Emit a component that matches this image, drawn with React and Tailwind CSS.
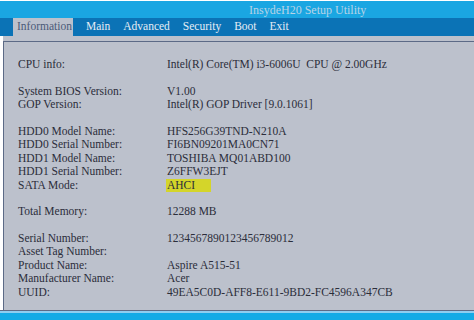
import React from 'react';

const groups = [
  [['CPU info:', 'Intel(R) Core(TM) i3-6006U\u00a0\u00a0CPU @ 2.00GHz']],
  [
    ['System BIOS Version:', 'V1.00'],
    ['GOP Version:', 'Intel(R) GOP Driver [9.0.1061]'],
  ],
  [
    ['HDD0 Model Name:', 'HFS256G39TND-N210A'],
    ['HDD0 Serial Number:', 'FI6BN09201MA0CN71'],
    ['HDD1 Model Name:', 'TOSHIBA MQ01ABD100'],
    ['HDD1 Serial Number:', 'Z6FFW3EJT'],
    ['SATA Mode:', 'AHCI', true],
  ],
  [['Total Memory:', '12288 MB']],
  [
    ['Serial Number:', '1234567890123456789012'],
    ['Asset Tag Number:', ''],
    ['Product Name:', 'Aspire A515-51'],
    ['Manufacturer Name:', 'Acer'],
    ['UUID:', '49EA5C0D-AFF8-E611-9BD2-FC4596A347CB'],
  ],
];

const tabs = ['Main', 'Advanced', 'Security', 'Boot', 'Exit'];

export default function App() {
  return (
    <div
      className="w-[474px] h-[320px] bg-white flex flex-col overflow-hidden"
      style={{ fontFamily: '"Liberation Serif", serif' }}
    >
      <div className="mt-[1px] h-[17px] bg-[#1aa6e2] flex items-center pl-[249px] text-[12px] text-[#b9d3e6]">
        InsydeH20 Setup Utility
      </div>
      <div className="h-[18px] bg-[#0b73b6] flex items-stretch pl-[13px] text-[11.5px] text-[#e6edf5]">
        <div className="bg-[#bcc1cc] text-[#4b5a78] pl-[4px] pr-[1px] flex items-center">Information</div>
        <div className="flex items-center gap-[13px] pl-[13px]">
          {tabs.map((t) => (
            <span key={t}>{t}</span>
          ))}
        </div>
      </div>
      <div className="flex-1 flex flex-col bg-[#bcc1cc] ml-[3px] border-l border-[#5c6a86]">
        <div className="h-[5px] -ml-[1px] bg-[#bcc1cc]" />
        <div className="h-[1px] bg-[#5c6a86] -ml-[1px]" />
        <div className="flex-1 pt-[16px] pl-[14px] text-[11.5px] leading-[13.5px] text-[#2b2d3a] flex flex-col gap-[13px]">
          {groups.map((g, i) => (
            <div key={i} className="flex flex-col">
              {g.map(([label, value, hi]) => (
                <div key={label} className="flex">
                  <span className="w-[149px]">{label}</span>
                  <span className={hi ? 'bg-[#d4d52a] px-[1px] -ml-[1px] w-[45px]' : ''}>{value}</span>
                </div>
              ))}
            </div>
          ))}
        </div>
        <div className="h-[1px] bg-[#5c6a86] -ml-[4px]" />
      </div>
      <div className="h-[2px] bg-[#8ecdf0]" />
      <div className="h-[7px] bg-[#12aae6]" />
    </div>
  );
}
